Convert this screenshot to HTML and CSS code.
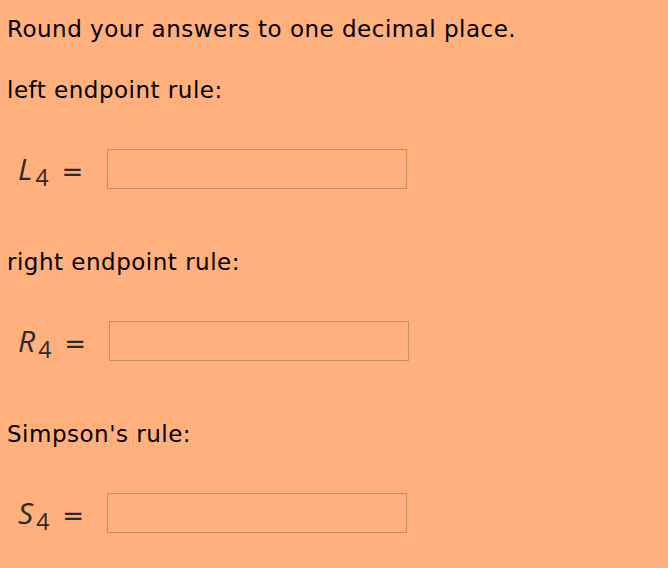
FILE: index.html
```html
<!DOCTYPE html>
<html>
<head>
<meta charset="utf-8">
<link rel="stylesheet" href="styles.css">
</head>
<body>
<div class="page">
  <p class="line first">Round your answers to one decimal place.</p>
  <p class="line">left endpoint rule:</p>
  <div class="row row-l">
    <span class="math"><i class="var">L</i><sub>4</sub><span class="eq">=</span></span>
    <span class="box"></span>
  </div>
  <p class="line">right endpoint rule:</p>
  <div class="row row-r">
    <span class="math"><i class="var">R</i><sub>4</sub><span class="eq">=</span></span>
    <span class="box"></span>
  </div>
  <p class="line">Simpson's rule:</p>
  <div class="row row-s">
    <span class="math"><i class="var">S</i><sub>4</sub><span class="eq">=</span></span>
    <span class="box"></span>
  </div>
</div>
</body>
</html>
```
FILE: styles.css
```css
html, body {
  margin: 0;
  padding: 0;
  background: #ffb07c;
}
.page {
  width: 668px;
  height: 568px;
  padding: 15px 0 0 7px;
  box-sizing: border-box;
  font-family: "DejaVu Sans", Verdana, sans-serif;
  font-size: 23px;
  letter-spacing: 0.5px;
  color: #000;
}
.line {
  margin: 0;
  height: 28px;
  line-height: 28px;
}
.first {
  margin-bottom: 33px;
}
.row {
  display: flex;
  align-items: flex-start;
  height: 40px;
  margin-top: 45px;
  margin-bottom: 59px;
}
.math {
  display: block;
  width: 100px;
  height: 40px;
  padding-left: 11px;
  box-sizing: border-box;
  font-family: "Open Sans", "DejaVu Sans", sans-serif;
  font-size: 30px;
  line-height: 40px;
  letter-spacing: 0;
  color: #2a2a2a;
  white-space: nowrap;
}
.var {
  font-style: italic;
}
.math sub {
  font-size: 23px;
  vertical-align: -6px;
  line-height: 0;
  margin-left: 3px;
}
.eq {
  font-family: "DejaVu Sans", sans-serif;
  font-size: 26px;
  margin-left: 13px;
  vertical-align: -1px;
}
.box {
  width: 298px;
  height: 38px;
  border: 1px solid #c48f68;
}
.row-r .box {
  margin-left: 2px;
}
```
